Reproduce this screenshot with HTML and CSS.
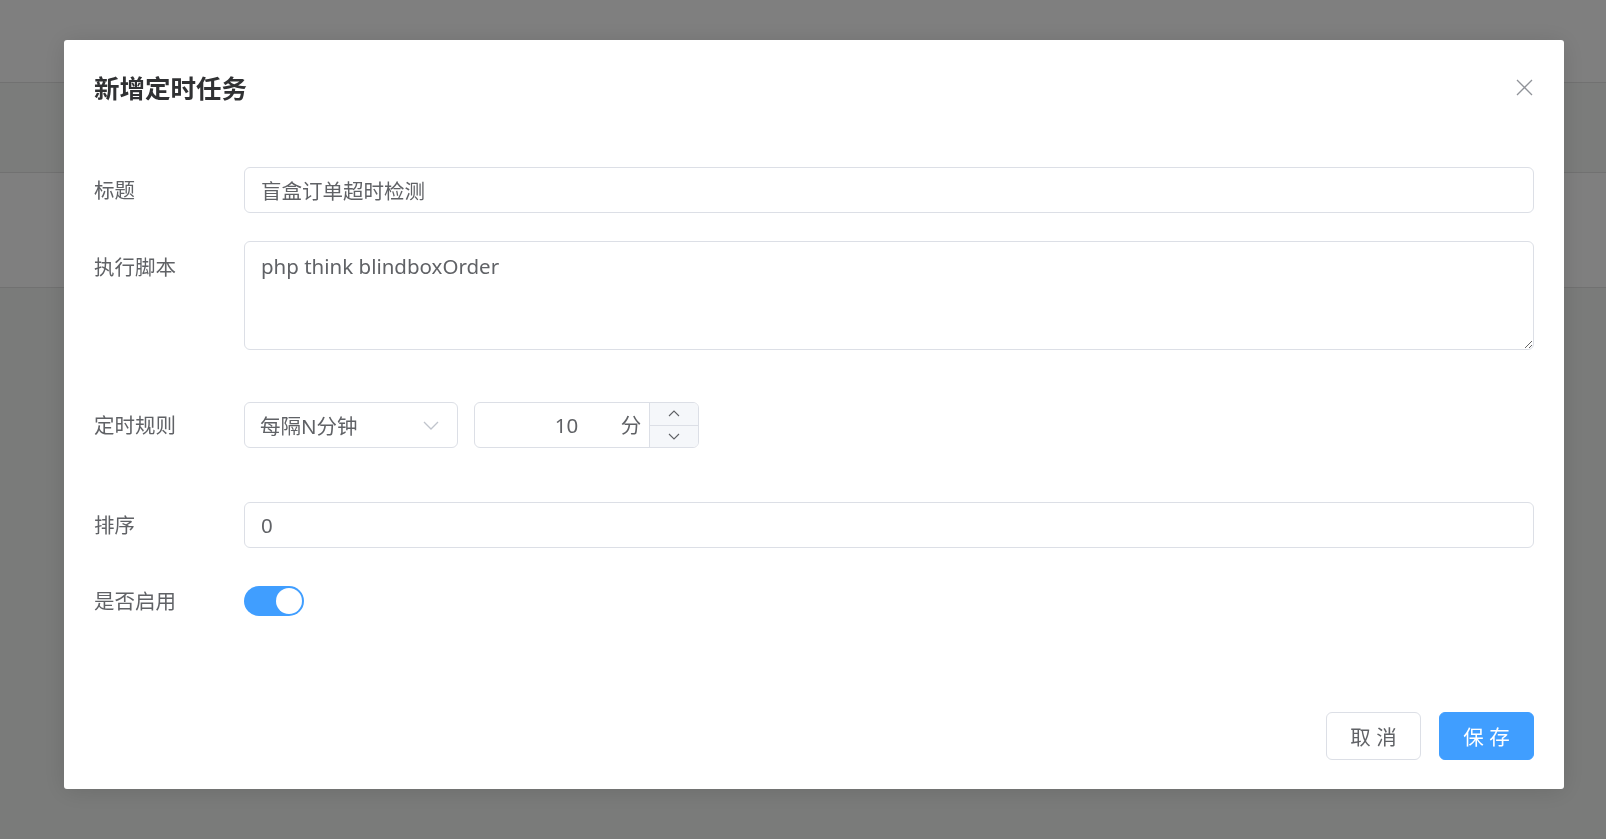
FILE: index.html
```html
<!DOCTYPE html>
<html lang="zh-CN">
<head>
<meta charset="utf-8">
<title>新增定时任务</title>
<link rel="stylesheet" href="styles.css">
</head>
<body>
<div class="page">
  <div class="page-header"></div>
  <div class="page-bar"></div>
  <div class="page-filter"></div>
</div>
<div class="overlay">
  <div class="dialog">
    <div class="dialog-header">
      <span class="dialog-title">新增定时任务</span>
      <button class="dialog-close" type="button" aria-label="关闭">
        <svg width="17" height="17" viewBox="0 0 17 17"><path d="M1 1 L16 16 M16 1 L1 16" stroke="#909399" stroke-width="1.3" fill="none"/></svg>
      </button>
    </div>
    <div class="dialog-body">
      <div class="form-item row-title">
        <label class="form-label">标题</label>
        <div class="form-content"><input class="input" type="text" value="盲盒订单超时检测"></div>
      </div>
      <div class="form-item row-script">
        <label class="form-label label-top">执行脚本</label>
        <div class="form-content"><textarea class="textarea">php think blindboxOrder</textarea></div>
      </div>
      <div class="form-item row-rule">
        <label class="form-label">定时规则</label>
        <div class="form-content rule-content">
          <div class="select">
            <span class="select-text">每隔N分钟</span>
            <svg class="select-arrow" width="16" height="9" viewBox="0 0 16 9"><path d="M1 1 L8 8 L15 1" stroke="#c0c4cc" stroke-width="1.3" fill="none"/></svg>
          </div>
          <div class="number">
            <span class="number-value">10</span>
            <span class="number-suffix">分</span>
            <div class="number-controls">
              <span class="number-btn"><svg width="12" height="7" viewBox="0 0 12 7"><path d="M1 6 L6 1 L11 6" stroke="#606266" stroke-width="1.1" fill="none"/></svg></span>
              <span class="number-btn number-btn-down"><svg width="12" height="7" viewBox="0 0 12 7"><path d="M1 1 L6 6 L11 1" stroke="#606266" stroke-width="1.1" fill="none"/></svg></span>
            </div>
          </div>
        </div>
      </div>
      <div class="form-item row-sort">
        <label class="form-label">排序</label>
        <div class="form-content"><input class="input" type="text" value="0"></div>
      </div>
      <div class="form-item row-switch">
        <label class="form-label">是否启用</label>
        <div class="form-content switch-content">
          <span class="switch"><span class="switch-knob"></span></span>
        </div>
      </div>
    </div>
    <div class="dialog-footer">
      <button class="btn btn-default" type="button">取 消</button>
      <button class="btn btn-primary" type="button">保 存</button>
    </div>
  </div>
</div>
</body>
</html>
```

FILE: styles.css
```css
* { box-sizing: border-box; }
html, body { margin: 0; padding: 0; }
body {
  width: 1606px;
  height: 839px;
  overflow: hidden;
  background: #f5f6f5;
  font-family: "Noto Sans", "Noto Sans CJK SC", sans-serif;
}
.page-header { height: 83px; background: #ffffff; border-bottom: 1px solid #e2e2e2; }
.page-bar { height: 90px; background: #f7f8f7; border-bottom: 1px solid #e2e2e2; }
.page-filter { height: 115px; background: #fefefe; border-bottom: 1px solid #e2e2e2; }

.overlay {
  position: fixed;
  inset: 0;
  background: rgba(0, 0, 0, 0.5);
}
.dialog {
  width: 1500px;
  height: 749px;
  margin: 40px 0 0 64px;
  background: #fff;
  border-radius: 3px;
  box-shadow: 0 2px 24px rgba(0, 0, 0, 0.12);
  display: flex;
  flex-direction: column;
}
.dialog-header {
  display: flex;
  align-items: center;
  justify-content: space-between;
  padding: 30px 30px 30px 30px;
}
.dialog-title {
  font-size: 25.5px;
  line-height: 36px;
  font-weight: 700;
  color: #303133;
}
.dialog-close {
  width: 20px;
  height: 20px;
  padding: 0;
  border: 0;
  background: transparent;
  display: flex;
  align-items: center;
  justify-content: center;
  margin-top: -2px;
}
.dialog-body {
  padding: 31px 30px 0 30px;
}
.form-item {
  display: flex;
  align-items: flex-start;
}
.row-title { margin-bottom: 28px; }
.row-script { margin-bottom: 52px; }
.row-rule { margin-bottom: 54px; }
.row-sort { margin-bottom: 30px; }
.form-label {
  width: 150px;
  flex: none;
  font-size: 20.5px;
  line-height: 46px;
  color: #606266;
}
.form-label.label-top { padding-top: 3px; }
.form-content { flex: 1; min-width: 0; }

.input {
  display: block;
  width: 100%;
  height: 46px;
  border: 1px solid #dcdfe6;
  border-radius: 6px;
  padding: 0 16px;
  font-family: inherit;
  font-size: 20.5px;
  color: #606266;
  background: #fff;
  outline: none;
}
.textarea {
  display: block;
  width: 100%;
  height: 109px;
  border: 1px solid #dcdfe6;
  border-radius: 6px;
  padding: 9px 16px;
  font-family: inherit;
  font-size: 20.5px;
  line-height: 30px;
  color: #606266;
  background: #fff;
  outline: none;
  resize: vertical;
}

.rule-content { display: flex; gap: 16px; align-items: center; }
.select {
  width: 214px;
  height: 46px;
  border: 1px solid #dcdfe6;
  border-radius: 6px;
  display: flex;
  align-items: center;
  justify-content: space-between;
  padding: 0 18px 0 15px;
}
.select-text { font-size: 20.5px; color: #606266; }
.number {
  width: 225px;
  height: 46px;
  border: 1px solid #dcdfe6;
  border-radius: 6px;
  display: flex;
  align-items: stretch;
  overflow: hidden;
}
.number-value {
  flex: 1;
  text-align: center;
  padding-left: 45px;
  font-size: 20.5px;
  line-height: 44px;
  color: #606266;
}
.number-suffix {
  width: 36px;
  text-align: center;
  font-size: 20.5px;
  line-height: 44px;
  color: #606266;
}
.number-controls {
  width: 49px;
  border-left: 1px solid #dcdfe6;
  background: #f5f7fa;
  display: flex;
  flex-direction: column;
}
.number-btn {
  flex: 1;
  display: flex;
  align-items: center;
  justify-content: center;
}
.number-btn-down { border-top: 1px solid #dcdfe6; }

.switch-content { height: 46px; display: flex; align-items: center; }
.switch {
  width: 60px;
  height: 30px;
  border-radius: 15px;
  background: #409eff;
  display: flex;
  align-items: center;
  justify-content: flex-end;
  padding-right: 2px;
}
.switch-knob {
  width: 26px;
  height: 26px;
  border-radius: 50%;
  background: #fff;
}

.dialog-footer {
  margin-top: auto;
  display: flex;
  justify-content: flex-end;
  gap: 18px;
  padding: 0 30px 29px 30px;
}
.btn {
  width: 95px;
  height: 48px;
  border-radius: 6px;
  font-family: inherit;
  font-size: 20.5px;
  padding: 0;
  cursor: pointer;
}
.btn-default { background: #fff; border: 1px solid #dcdfe6; color: #606266; }
.btn-primary { background: #409eff; border: 1px solid #409eff; color: #fff; }
```
